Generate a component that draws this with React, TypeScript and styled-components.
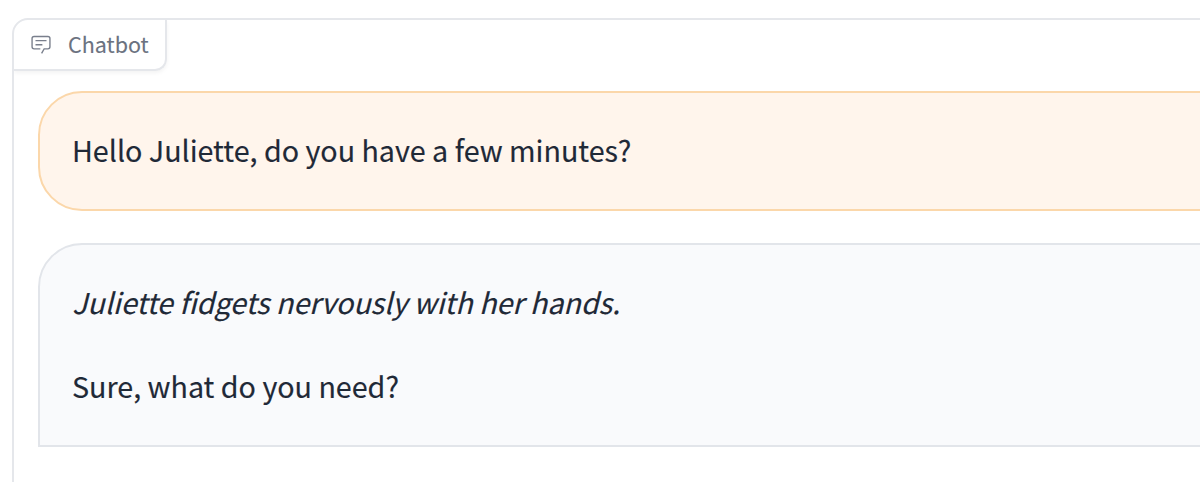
import React from 'react';
import styled, { createGlobalStyle, css } from 'styled-components';

const GlobalStyle = createGlobalStyle`
  * {
    box-sizing: border-box;
  }
  body {
    margin: 0;
    background: #ffffff;
    color: #1f2937;
    font-family: 'Noto Sans CJK SC', 'Noto Sans', sans-serif;
    overflow: hidden;
  }
`;

const Page = styled.main`
  width: 100vw;
  height: 100vh;
  padding: 18px 0 0 12px;
  overflow: hidden;
`;

const Panel = styled.section`
  width: 1280px;
  height: 560px;
  border: 2px solid #e5e7eb;
  border-radius: 16px;
  overflow: hidden;
`;

const PanelLabel = styled.div`
  display: inline-flex;
  align-items: center;
  gap: 16px;
  width: 153px;
  height: 51px;
  padding: 0 0 2px 16px;
  border-right: 2px solid #e5e7eb;
  border-bottom: 2px solid #e5e7eb;
  border-bottom-right-radius: 12px;
  box-shadow: 0 2px 4px rgba(0, 0, 0, 0.05);
  color: #6b7280;
  font-size: 21.5px;
  line-height: 32px;
  vertical-align: top;
  -webkit-text-stroke: 0.1px currentColor;
`;

const ChatIcon = styled.svg`
  width: 22px;
  height: 22px;
  flex: none;
  fill: currentColor;
  opacity: 0.9;
`;

const MessageList = styled.div`
  display: flex;
  flex-direction: column;
  gap: 32px;
  padding: 20px 24px;
`;

const Message = styled.div<{ $from: 'user' | 'bot' }>`
  display: flex;
  flex-direction: column;
  gap: 36px;
  padding: 33px 32px;
  border: 2px solid;
  border-radius: 44px;
  font-size: 28.66px;
  line-height: 48px;
  -webkit-text-stroke: 0.15px currentColor;
  ${({ $from }) =>
    $from === 'user'
      ? css`
          height: 120px;
          background: #fff5ec;
          border-color: #fbd7aa;
          border-bottom-right-radius: 0;
        `
      : css`
          height: 204px;
          background: #f9fafc;
          border-color: #e2e5ea;
          border-bottom-left-radius: 0;
        `}
`;

const Line = styled.p`
  margin: 0;
  white-space: nowrap;
`;

const Action = styled(Line)`
  font-style: italic;
`;

function App() {
  return (
    <Page>
      <GlobalStyle />
      <Panel>
        <PanelLabel>
          <ChatIcon viewBox="0 0 32 32" aria-hidden="true">
            <path d="M17.74 30L16 29l4-7h6a2 2 0 0 0 2-2V8a2 2 0 0 0-2-2H6a2 2 0 0 0-2 2v12a2 2 0 0 0 2 2h9v2H6a4 4 0 0 1-4-4V8a4 4 0 0 1 4-4h20a4 4 0 0 1 4 4v12a4 4 0 0 1-4 4h-4.84Z" />
            <path d="M8 10h16v2H8zm0 6h10v2H8z" />
          </ChatIcon>
          <span>Chatbot</span>
        </PanelLabel>
        <MessageList>
          <Message $from="user">
            <Line>Hello Juliette, do you have a few minutes?</Line>
          </Message>
          <Message $from="bot">
            <Action>Juliette fidgets nervously with her hands.</Action>
            <Line>Sure, what do you need?</Line>
          </Message>
        </MessageList>
      </Panel>
    </Page>
  );
}

export default App;
